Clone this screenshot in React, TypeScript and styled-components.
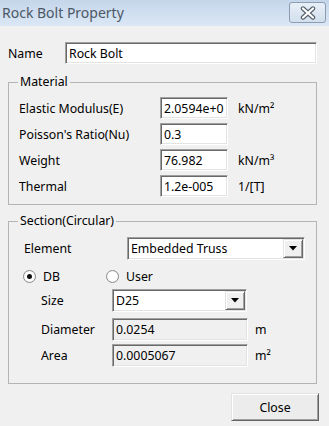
import React from "react";
import styled, { createGlobalStyle } from "styled-components";

const Global = createGlobalStyle`
  html, body { margin: 0; padding: 0; background: #f0f0f0; }
  * { box-sizing: border-box; }
`;

const Window = styled.div`
  width: 329px;
  height: 426px;
  background: #f0f0f0;
  display: flex;
  flex-direction: column;
  overflow: hidden;
  font-family: "Noto Sans", "Liberation Sans", sans-serif;
  font-size: 12.3px;
  color: #000;
`;

const TitleBar = styled.div`
  flex: 0 0 26px;
  display: flex;
  align-items: flex-start;
  justify-content: space-between;
  background: linear-gradient(#c5d6ea, #dbe7f5);
`;

const Title = styled.div`
  font-size: 14px;
  line-height: 26px;
  color: #4b5866;
  padding-left: 2px;
`;

const CloseX = styled.div`
  width: 37px;
  height: 21px;
  margin: 2px 3px 0 0;
  border: 1px solid #8c9cb1;
  border-radius: 3px;
  background: linear-gradient(#e8eff8, #d3dfed);
  display: flex;
  align-items: center;
  justify-content: center;
`;

const Body = styled.div`
  flex: 1;
  display: flex;
  flex-direction: column;
  padding: 16px 12px 0 8px;
`;

const NameRow = styled.div`
  display: grid;
  grid-template-columns: 57px 252px;
  align-items: center;
`;

const Field = styled.div<{ $w: number; $h?: number; $ro?: boolean }>`
  width: ${(p) => p.$w}px;
  height: ${(p) => p.$h ?? 22}px;
  line-height: 19px;
  padding: 1px 3px 0;
  white-space: nowrap;
  overflow: hidden;
  background: ${(p) => (p.$ro ? "#f0f0f0" : "#fff")};
  border: 1px solid;
  border-color: #a0a0a0 #ffffff #ffffff #a0a0a0;
  box-shadow: inset 1px 1px 0 #696969, inset -1px -1px 0 #e3e3e3;
`;

const Group = styled.fieldset<{ $mt: number }>`
  margin: ${(p) => p.$mt}px 0 0 0;
  padding: 0;
  border: 1px solid #b4b4b4;
  min-width: 0;
`;

const Legend = styled.legend`
  margin-left: 9px;
  padding: 0 2px;
  line-height: 16px;
`;

const MaterialGrid = styled.div`
  display: grid;
  grid-template-columns: 131px 68px auto;
  column-gap: 10px;
  row-gap: 4px;
  align-items: center;
  padding: 7px 0 7px 10px;
`;

const Unit = styled.span`
  white-space: nowrap;
`;

const SectionBody = styled.div`
  display: flex;
  flex-direction: column;
  padding: 8px 0 16px 15px;
`;

const ElementRow = styled.div`
  display: grid;
  grid-template-columns: 103px 178px;
  align-items: center;
`;

const RadioRow = styled.div`
  display: grid;
  grid-template-columns: 83px auto;
  align-items: center;
  height: 16px;
  margin: 8px 0 0 -1px;
`;

const RadioItem = styled.label`
  display: flex;
  align-items: center;
  gap: 7px;
`;

const RadioCircle = styled.span<{ $on?: boolean }>`
  width: 13px;
  height: 13px;
  border-radius: 50%;
  border: 1px solid #8a8a8a;
  background: radial-gradient(circle, #ffffff 55%, #e2e2e2 100%);
  display: flex;
  align-items: center;
  justify-content: center;
  &::after {
    content: "";
    width: 5px;
    height: 5px;
    border-radius: 50%;
    background: ${(p) => (p.$on ? "#111" : "transparent")};
  }
`;

const SubRow = styled.div<{ $mt: number }>`
  display: grid;
  grid-template-columns: 64px auto auto;
  column-gap: 7px;
  justify-content: start;
  align-items: center;
  margin: ${(p) => p.$mt}px 0 0 17px;
`;

const SubLabel = styled.span`
  width: 57px;
`;

const Select = styled.div<{ $w: number }>`
  width: ${(p) => p.$w}px;
  height: 23px;
  display: flex;
  align-items: stretch;
  background: #fff;
  border: 1px solid;
  border-color: #a0a0a0 #ffffff #ffffff #a0a0a0;
  box-shadow: inset 1px 1px 0 #696969, inset -1px -1px 0 #e3e3e3;
  padding: 1px;
`;

const SelectText = styled.span`
  flex: 1;
  line-height: 19px;
  padding-left: 2px;
  white-space: nowrap;
`;

const ArrowBtn = styled.span`
  width: 20px;
  background: #f0f0f0;
  border: 1px solid;
  border-color: #e3e3e3 #696969 #696969 #e3e3e3;
  box-shadow: inset 1px 1px 0 #fff, inset -1px -1px 0 #a0a0a0;
  display: flex;
  align-items: center;
  justify-content: center;
`;

const Footer = styled.div`
  display: flex;
  justify-content: flex-end;
  margin: 9px -2px 0 0;
`;

const Button = styled.button`
  width: 88px;
  height: 28px;
  font: inherit;
  color: #000;
  background: #ececec;
  border: 1px solid;
  border-color: #e3e3e3 #646464 #646464 #e3e3e3;
  box-shadow: inset 1px 1px 0 #fff, inset -1px -1px 0 #a0a0a0;
  padding: 0;
`;

const Arrow = () => (
  <svg width="8" height="5" viewBox="0 0 8 5">
    <path d="M0 0 H8 L4 4.5 Z" fill="#000" />
  </svg>
);

const Dropdown = ({ w, value }: { w: number; value: string }) => (
  <Select $w={w}>
    <SelectText>{value}</SelectText>
    <ArrowBtn>
      <Arrow />
    </ArrowBtn>
  </Select>
);

const XIcon = () => (
  <svg width="18" height="14" viewBox="0 0 18 14">
    <path d="M4 2.5 L14 11.5 M14 2.5 L4 11.5" stroke="#55606c" strokeWidth="4.4" strokeLinecap="round" />
    <path d="M4 2.5 L14 11.5 M14 2.5 L4 11.5" stroke="#ffffff" strokeWidth="2.2" strokeLinecap="round" />
  </svg>
);

const materials = [
  { label: "Elastic Modulus(E)", value: "2.0594e+0", unit: "kN/m²" },
  { label: "Poisson's Ratio(Nu)", value: "0.3", unit: "" },
  { label: "Weight", value: "76.982", unit: "kN/m³" },
  { label: "Thermal", value: "1.2e-005", unit: "1/[T]" },
];

export default function App() {
  return (
    <Window>
      <Global />
      <TitleBar>
        <Title>Rock Bolt Property</Title>
        <CloseX>
          <XIcon />
        </CloseX>
      </TitleBar>
      <Body>
        <NameRow>
          <span>Name</span>
          <Field $w={252}>Rock Bolt</Field>
        </NameRow>

        <Group $mt={10}>
          <Legend>Material</Legend>
          <MaterialGrid>
            {materials.map((m) => (
              <React.Fragment key={m.label}>
                <span>{m.label}</span>
                <Field $w={68}>{m.value}</Field>
                <Unit>{m.unit}</Unit>
              </React.Fragment>
            ))}
          </MaterialGrid>
        </Group>

        <Group $mt={8}>
          <Legend>Section(Circular)</Legend>
          <SectionBody>
            <ElementRow>
              <span>Element</span>
              <Dropdown w={178} value="Embedded Truss" />
            </ElementRow>
            <RadioRow>
              <RadioItem>
                <RadioCircle $on />
                <span>DB</span>
              </RadioItem>
              <RadioItem>
                <RadioCircle />
                <span>User</span>
              </RadioItem>
            </RadioRow>
            <SubRow $mt={5}>
              <SubLabel>Size</SubLabel>
              <Dropdown w={135} value="D25" />
              <span />
            </SubRow>
            <SubRow $mt={6}>
              <SubLabel>Diameter</SubLabel>
              <Field $w={136} $h={23} $ro>0.0254</Field>
              <Unit>m</Unit>
            </SubRow>
            <SubRow $mt={3}>
              <SubLabel>Area</SubLabel>
              <Field $w={136} $h={23} $ro>0.0005067</Field>
              <Unit>m²</Unit>
            </SubRow>
          </SectionBody>
        </Group>

        <Footer>
          <Button>Close</Button>
        </Footer>
      </Body>
    </Window>
  );
}
